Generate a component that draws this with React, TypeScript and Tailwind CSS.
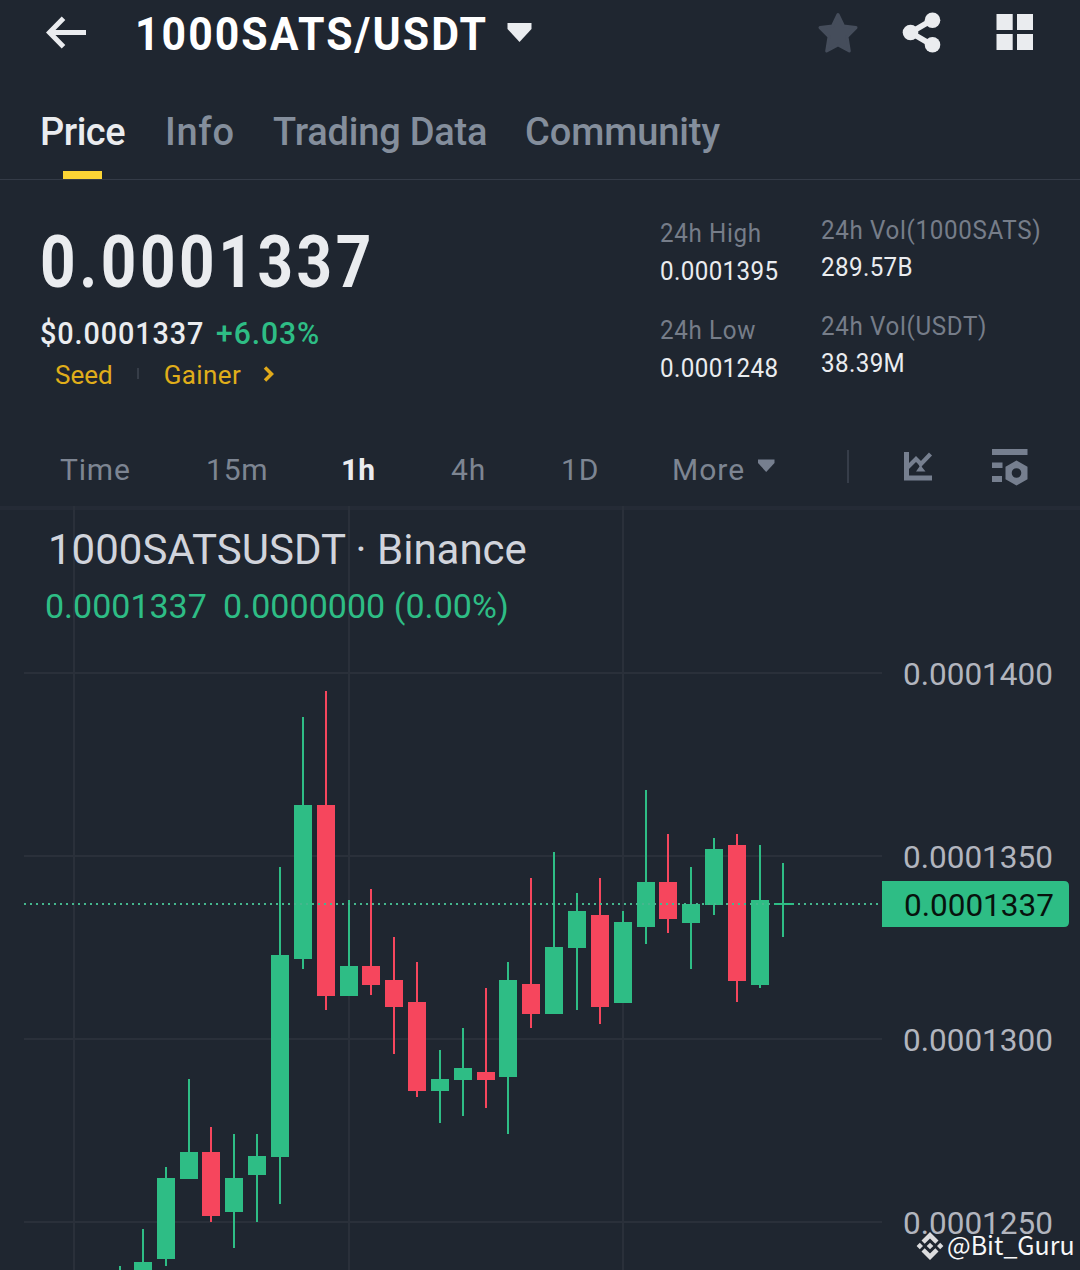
import React, { useState } from "react";

type Candle = {
  x: number;
  high: number;
  low: number;
  top: number;
  bottom: number;
  down?: boolean;
};

const GREEN = "#2ebd85";
const RED = "#f6465d";

const tabs = [
  { label: "Price", width: "w-[85px]", text: "-tracking-[0.5px]" },
  { label: "Info", width: "w-[70px]", text: "pl-px tracking-[0.7px]" },
  { label: "Trading Data", width: "w-[213px]", text: "-tracking-[0.2px]" },
  { label: "Community", width: "w-[196px]", text: "-tracking-[0.1px]" },
];

const intervals = [
  { label: "Time", width: "w-[146px]" },
  { label: "15m", width: "w-[135px]" },
  { label: "1h", width: "w-[110px]" },
  { label: "4h", width: "w-[110px]" },
  { label: "1D", width: "w-[111px]" },
];

const candles: Candle[] = [
  { x: 120, high: 1266, low: 1275, top: 1272, bottom: 1275 },
  { x: 143, high: 1229, low: 1275, top: 1262, bottom: 1275 },
  { x: 166, high: 1167, low: 1266, top: 1178, bottom: 1259 },
  { x: 189, high: 1079, low: 1179, top: 1152, bottom: 1179 },
  { x: 211, high: 1127, low: 1222, top: 1152, bottom: 1216, down: true },
  { x: 234, high: 1134, low: 1248, top: 1178, bottom: 1212 },
  { x: 257, high: 1134, low: 1222, top: 1156, bottom: 1175 },
  { x: 280, high: 867, low: 1204, top: 955, bottom: 1157 },
  { x: 303, high: 717, low: 969, top: 805, bottom: 959 },
  { x: 326, high: 691, low: 1010, top: 805, bottom: 996, down: true },
  { x: 349, high: 900, low: 996, top: 966, bottom: 996 },
  { x: 371, high: 889, low: 995, top: 966, bottom: 985, down: true },
  { x: 394, high: 937, low: 1054, top: 980, bottom: 1007, down: true },
  { x: 417, high: 962, low: 1097, top: 1002, bottom: 1091, down: true },
  { x: 440, high: 1050, low: 1123, top: 1079, bottom: 1091 },
  { x: 463, high: 1028, low: 1116, top: 1068, bottom: 1080 },
  { x: 486, high: 988, low: 1108, top: 1072, bottom: 1080, down: true },
  { x: 508, high: 962, low: 1134, top: 980, bottom: 1077 },
  { x: 531, high: 878, low: 1028, top: 984, bottom: 1014, down: true },
  { x: 554, high: 852, low: 1014, top: 947, bottom: 1014 },
  { x: 577, high: 893, low: 1010, top: 911, bottom: 948 },
  { x: 600, high: 878, low: 1024, top: 915, bottom: 1007, down: true },
  { x: 623, high: 911, low: 1003, top: 922, bottom: 1003 },
  { x: 646, high: 790, low: 944, top: 882, bottom: 927 },
  { x: 668, high: 834, low: 933, top: 882, bottom: 919, down: true },
  { x: 691, high: 867, low: 969, top: 904, bottom: 923 },
  { x: 714, high: 838, low: 915, top: 849, bottom: 905 },
  { x: 737, high: 834, low: 1002, top: 845, bottom: 981, down: true },
  { x: 760, high: 845, low: 988, top: 900, bottom: 985 },
  { x: 783, high: 863, low: 937, top: 903, bottom: 905 },
];

const priceLevels = [
  { y: 673, label: "0.0001400" },
  { y: 856, label: "0.0001350" },
  { y: 1039, label: "0.0001300" },
  { y: 1222, label: "0.0001250" },
];

const Header: React.FC = () => (
  <header className="flex h-[68px] items-center pl-[45px]">
    <svg className="-mt-[2px]" width="42" height="34" viewBox="0 0 42 34" fill="none" stroke="#eaecef" strokeWidth="5">
      <path d="M41 16.5H5" />
      <path d="M18.5 2.2L4.5 16.5L18.5 30.8" />
    </svg>
    <h1 className="ml-[48px] w-[355px] origin-left scale-x-[0.93] text-[46px] leading-[68px] font-bold whitespace-nowrap text-white tracking-[2.2px]">
      1000SATS/USDT
    </h1>
    <svg className="-mt-[2px] ml-[17px]" width="25" height="20" viewBox="0 0 25 20" fill="#eaecef">
      <path d="M0.5 0H24.5V6L12.5 19L0.5 6Z" />
    </svg>

    {/* Right side actions */}
    <svg className="-mt-[2px] ml-[284px]" width="44" height="44" viewBox="0 0 44 44">
      <path
        d="M22 3.5L27.5 15L40 16.6L31 25.8L33.3 40L22 34L10.7 40L13 25.8L4 16.6L16.5 15Z"
        fill="#454d5b"
        stroke="#454d5b"
        strokeWidth="3"
        strokeLinejoin="round"
      />
    </svg>
    <svg className="-mt-[2px] ml-[41px]" width="42" height="42" viewBox="0 0 42 42" fill="#eaecef">
      <path d="M31 8L9.5 20.5L31 33" fill="none" stroke="#eaecef" strokeWidth="5.5" />
      <circle cx="9.5" cy="20.5" r="7.8" />
      <circle cx="31.5" cy="8.3" r="7.8" />
      <circle cx="31.5" cy="32.7" r="7.8" />
    </svg>
    <svg className="-mt-[3px] ml-[53px]" width="38" height="37" viewBox="0 0 38 37" fill="#eaecef">
      <path d="M0.5 0H16.7V16H0.5ZM21 0H37V16H21ZM0.5 20H16.7V36H0.5ZM21 20H37V36H21Z" />
    </svg>
  </header>
);

const Stat: React.FC<{ label: string; value: string }> = ({ label, value }) => (
  <div className="origin-left scale-x-[0.93] text-[26px] whitespace-nowrap">
    <div className="tracking-[0.7px] text-[#767d89]">{label}</div>
    <div className="tracking-[0.4px] text-[#eaecef]">{value}</div>
  </div>
);

const Summary: React.FC = () => (
  <section className="flex h-[250px]">
    <div className="w-[660px] pt-[45px] pl-10">
      <div className="origin-left scale-x-[0.85] text-[73px] leading-[74px] font-bold tracking-[4.2px] text-[#eaecef]">
        0.0001337
      </div>
      <div className="mt-4 flex text-[32px] leading-[36px] font-medium tracking-[1px]">
        <span className="w-[176px] origin-left scale-x-[0.9] text-[#eaecef]">$0.0001337</span>
        <span className="origin-left scale-x-[0.94] text-[#2ebd85]">+6.03%</span>
      </div>
      <div className="mt-1.5 flex items-center pl-[15px] text-[26px] leading-[36px] text-[#e0ae1a]">
        <span>Seed</span>
        <span className="-mt-[3px] ml-[24px] h-[11px] w-[2px] bg-[#363d48]" />
        <span className="ml-[25px] w-[98px] tracking-[0.4px]">Gainer</span>
        <svg className="-mt-[2px]" width="14" height="18" viewBox="0 0 14 18" fill="none" stroke="#e0a91a" strokeWidth="3.5">
          <path d="M3 2.5L9.5 9L3 15.5" />
        </svg>
      </div>
    </div>
    <div className="w-[161px] pt-[34px] leading-[38px]">
      <Stat label="24h High" value="0.0001395" />
      <div className="h-[21px]" />
      <Stat label="24h Low" value="0.0001248" />
    </div>
    <div className="pt-[32px] leading-[37px]">
      <Stat label="24h Vol(1000SATS)" value="289.57B" />
      <div className="h-[22px]" />
      <Stat label="24h Vol(USDT)" value="38.39M" />
    </div>
  </section>
);

const Chart: React.FC = () => (
  <svg
    className="block font-[Roboto,sans-serif]"
    width="1080"
    height="764"
    viewBox="0 506 1080 764"
  >
    <rect x="0" y="506" width="1080" height="4" fill="#252b36" />

    {/* Grid */}
    {[74, 349, 623].map((x) => (
      <rect key={x} x={x - 1} y="506" width="2" height="764" fill="#2a303a" />
    ))}
    {priceLevels.map((level) => (
      <rect key={level.y} x="24" y={level.y - 1} width="858" height="2" fill="#2a303a" />
    ))}

    {/* Candles */}
    {candles.map((c) => {
      const color = c.down ? RED : GREEN;
      return (
        <g key={c.x} fill={color}>
          <rect x={c.x - 1} y={c.high} width="2" height={c.low - c.high} />
          <rect x={c.x - 9} y={c.top} width="18" height={c.bottom - c.top} />
        </g>
      );
    })}

    {/* Last price */}
    <path d="M24 904H880" stroke="#45b78e" strokeWidth="2" strokeDasharray="2 4" />
    <rect x="774" y="903" width="20" height="2" fill={GREEN} />

    <text x="48" y="564" fontSize="42" fill="#d1d4dc">
      1000SATSUSDT · Binance
    </text>
    <g fontSize="34" fill={GREEN}>
      <text x="45" y="618">0.0001337</text>
      <text x="223" y="618" letterSpacing="0.05">0.0000000 (0.00%)</text>
    </g>

    <g fontSize="31.5" fill="#b2b5be">
      {priceLevels.map((level) => (
        <text key={level.label} x="903" y={level.y + 12}>
          {level.label}
        </text>
      ))}
    </g>
    <path d="M882 881H1064Q1069 881 1069 886V922Q1069 927 1064 927H882Z" fill={GREEN} />
    <text x="904" y="916" fontSize="31.5" fill="#07120d">
      0.0001337
    </text>

    {/* Author mark */}
    <g fill="#dcdcde">
      <path d="M930 1232L938.5 1240.5L935.3 1243.7L930 1238.4L924.7 1243.7L921.5 1240.5Z" />
      <path d="M930 1260L938.5 1251.5L935.3 1248.3L930 1253.6L924.7 1248.3L921.5 1251.5Z" />
      <path d="M930 1242.7L933.3 1246L930 1249.3L926.7 1246Z" />
      <path d="M919.8 1242.8L923 1246L919.8 1249.2L916.6 1246Z" />
      <path d="M940.2 1242.8L943.4 1246L940.2 1249.2L937 1246Z" />
    </g>
    <text
      className="font-['Noto_Sans_CJK_SC',sans-serif]"
      x="947"
      y="1255"
      fontSize="25"
      fontWeight="400"
      fill="#f7f7f8"
    >
      @Bit_Guru
    </text>
  </svg>
);

const App: React.FC = () => {
  const [activeTab, setActiveTab] = useState<string>("Price");
  const [interval, setInterval] = useState<string>("1h");

  return (
    <div className="h-[1270px] w-[1080px] overflow-hidden bg-[#1f2630] font-[Roboto,sans-serif]">
      <Header />

      {/* Tabs */}
      <nav className="flex h-[112px] gap-[39px] border-b border-[#343b47] pt-[17px] pl-10">
        {tabs.map((tab) => (
          <button
            key={tab.label}
            onClick={() => setActiveTab(tab.label)}
            className={`relative h-[94px] text-left text-[38px] font-medium whitespace-nowrap ${tab.width} ${tab.text} ${
              activeTab === tab.label ? "text-[#eaecef]" : "text-[#848e9c]"
            }`}
          >
            {tab.label}
            {activeTab === tab.label && (
              <span className="absolute bottom-0 left-[23px] h-2 w-[39px] bg-[#fcd535]" />
            )}
          </button>
        ))}
      </nav>

      <Summary />

      {/* Interval toolbar */}
      <div className="flex h-[76px] items-center pt-[2px] pl-[60px] text-[30px] text-[#7d8592]">
        {intervals.map((item) => (
          <button
            key={item.label}
            onClick={() => setInterval(item.label)}
            className={`text-left ${item.width} ${
              interval === item.label ? "font-bold text-[#eaecef]" : "tracking-[0.8px]"
            }`}
          >
            {item.label}
          </button>
        ))}
        <span className="w-[85px] tracking-[1px]">More</span>
        <svg className="-mt-[7px]" width="18" height="14" viewBox="0 0 18 14" fill="#767f8f">
          <path d="M1 0.5H17.5V4L9.2 13L1 4Z" />
        </svg>
        <span className="-mt-[5px] ml-[72px] h-[33px] w-[2px] bg-[#363d49]" />
        <svg className="-mt-[5px] ml-[55px]" width="30" height="30" viewBox="0 0 30 30" fill="none" stroke="#767f8f">
          <path d="M2.5 0V26H28" strokeWidth="5" />
          <path d="M3.5 15.5L12 7L17 12L26.5 2" strokeWidth="4.2" />
          <path d="M14 11H19L17.5 14.5L21.5 19.5H12L15.5 14.5Z" fill="#767f8f" stroke="none" />
        </svg>
        <svg className="-mt-[4px] ml-[58px]" width="36" height="38" viewBox="0 0 36 38" fill="#767f8f">
          <path d="M0 1H35.5V7H0ZM0 14.5H10.5V20H0ZM0 28H10V34H0Z" />
          <path
            fillRule="evenodd"
            d="M24.5 12.5L35.5 18.7V31.3L24.5 37.5L13.5 31.3V18.7ZM24.5 20.2A4.8 4.8 0 1 0 24.5 29.8A4.8 4.8 0 1 0 24.5 20.2Z"
          />
        </svg>
      </div>

      <Chart />
    </div>
  );
};

export default App;
